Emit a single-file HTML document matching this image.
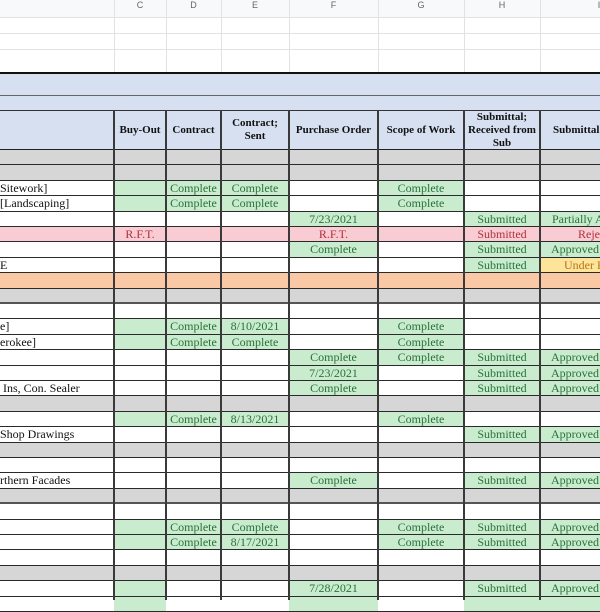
<!DOCTYPE html>
<html><head><meta charset="utf-8">
<style>
*{box-sizing:border-box;margin:0;padding:0}
body{width:600px;height:600px;overflow:hidden;background:#fff;position:relative;font-family:"Liberation Serif",serif}
.abs{position:absolute}
.hl{position:absolute;left:0;width:600px;height:1px;background:#e2e2e2}
.vl{position:absolute;width:1px;background:#e2e2e2;top:0;height:72px}
.colh{position:absolute;top:0;height:17px;line-height:17px;font:9px "Liberation Sans",sans-serif;color:#666;text-align:center}
.r{position:absolute;left:0;width:600px;height:15.4px;border-bottom:1px solid #2a2a2a}
.c{position:absolute;top:0;height:100%;font-size:12px;line-height:14px;text-align:center;color:#2b7038;white-space:nowrap;overflow:hidden}
.a{left:0;width:114px;text-align:left;color:#111}
.b{left:114px;width:52px}.cc{left:166px;width:55px}.d{left:221px;width:68px}.e{left:289px;width:89px}.f{left:378px;width:86px}.g{left:464px;width:76px}.h{left:540px;width:60px;text-align:left}
.G{background:#c9eccf}.Y{background:#fde49b;color:#b8741a}
.gray{background:#d6d6d6}.pink{background:#f9cbd2}.org{background:#f8c9a4}
.red{color:#b2303c}
.v{position:absolute;top:110px;height:490px;width:2px;background:#3a3a3a}
.hd{position:absolute;top:110px;height:40px;display:flex;align-items:center;justify-content:center;text-align:center;font-weight:bold;font-size:11px;line-height:13px;color:#111}
</style></head><body>
<div class="abs" style="left:0;top:0;width:600px;height:17px;background:#f8f9fa"></div>
<div class="hl" style="top:17px"></div><div class="hl" style="top:33px"></div><div class="hl" style="top:49px"></div>
<div class="vl" style="left:114px"></div><div class="vl" style="left:166px"></div><div class="vl" style="left:221px"></div><div class="vl" style="left:289px"></div><div class="vl" style="left:378px"></div><div class="vl" style="left:464px"></div><div class="vl" style="left:540px"></div>
<div class="colh" style="left:114px;width:52px">C</div><div class="colh" style="left:166px;width:55px">D</div><div class="colh" style="left:221px;width:68px">E</div><div class="colh" style="left:289px;width:89px">F</div><div class="colh" style="left:378px;width:86px">G</div><div class="colh" style="left:464px;width:76px">H</div><div class="colh" style="left:594px;width:10px">I</div>
<div class="abs" style="left:0;top:72px;width:600px;height:2px;background:#111"></div>
<div class="abs" style="left:0;top:74px;width:600px;height:21px;background:#d7e0f1"></div>
<div class="abs" style="left:0;top:95px;width:600px;height:1px;background:#666"></div>
<div class="abs" style="left:0;top:96px;width:600px;height:14px;background:#d7e0f1"></div>
<div class="abs" style="left:0;top:110px;width:600px;height:1px;background:#333"></div>
<div class="abs" style="left:0;top:111px;width:600px;height:39px;background:#d7e0f1;border-bottom:1px solid #222"></div>
<div class="hd" style="left:114px;width:52px">Buy-Out</div>
<div class="hd" style="left:166px;width:55px">Contract</div>
<div class="hd" style="left:221px;width:68px">Contract;<br>Sent</div>
<div class="hd" style="left:289px;width:89px">Purchase Order</div>
<div class="hd" style="left:378px;width:86px">Scope of Work</div>
<div class="hd" style="left:464px;width:76px">Submittal;<br>Received from<br>Sub</div>
<div class="hd" style="left:553px;width:80px;justify-content:flex-start">Submittal;</div>

<div class="r gray" style="top:150px"></div>
<div class="r gray" style="top:165.4px"></div>
<div class="r" style="top:180.8px"><div class="c a">Sitework]</div><div class="c b G"></div><div class="c cc G">Complete</div><div class="c d G">Complete</div><div class="c f G">Complete</div></div>
<div class="r" style="top:196.2px"><div class="c a">[Landscaping]</div><div class="c b G"></div><div class="c cc G">Complete</div><div class="c d G">Complete</div><div class="c f G">Complete</div></div>
<div class="r" style="top:211.6px"><div class="c e G">7/23/2021</div><div class="c g G">Submitted</div><div class="c h G" style="padding-left:12px">Partially Approved</div></div>
<div class="r pink" style="top:227px"><div class="c b red">R.F.T.</div><div class="c e red">R.F.T.</div><div class="c g red">Submitted</div><div class="c h red" style="padding-left:38px">Rejected</div></div>
<div class="r" style="top:242.4px"><div class="c e G">Complete</div><div class="c g G">Submitted</div><div class="c h G" style="padding-left:11px">Approved</div></div>
<div class="r" style="top:257.8px"><div class="c a">E</div><div class="c g G">Submitted</div><div class="c h Y" style="padding-left:24px">Under Review</div></div>
<div class="r org" style="top:273.2px"></div>
<div class="r gray" style="top:288.6px;border-bottom:2px solid #555"></div>
<div class="r" style="top:304px"></div>
<div class="r" style="top:319.4px"><div class="c a">e]</div><div class="c b G"></div><div class="c cc G">Complete</div><div class="c d G">8/10/2021</div><div class="c f G">Complete</div></div>
<div class="r" style="top:334.8px"><div class="c a">erokee]</div><div class="c b G"></div><div class="c cc G">Complete</div><div class="c d G">Complete</div><div class="c f G">Complete</div></div>
<div class="r" style="top:350.2px"><div class="c e G">Complete</div><div class="c f G">Complete</div><div class="c g G">Submitted</div><div class="c h G" style="padding-left:11px">Approved</div></div>
<div class="r" style="top:365.6px"><div class="c e G">7/23/2021</div><div class="c g G">Submitted</div><div class="c h G" style="padding-left:11px">Approved</div></div>
<div class="r" style="top:381px"><div class="c a">&nbsp;Ins, Con. Sealer</div><div class="c e G">Complete</div><div class="c g G">Submitted</div><div class="c h G" style="padding-left:11px">Approved</div></div>
<div class="r gray" style="top:396.4px"></div>
<div class="r" style="top:411.8px"><div class="c b G"></div><div class="c cc G">Complete</div><div class="c d G">8/13/2021</div><div class="c f G">Complete</div></div>
<div class="r" style="top:427.2px"><div class="c a">Shop Drawings</div><div class="c g G">Submitted</div><div class="c h G" style="padding-left:11px">Approved</div></div>
<div class="r gray" style="top:442.6px"></div>
<div class="r" style="top:458px"></div>
<div class="r" style="top:473.4px"><div class="c a">rthern Facades</div><div class="c e G">Complete</div><div class="c g G">Submitted</div><div class="c h G" style="padding-left:11px">Approved</div></div>
<div class="r gray" style="top:488.8px;border-bottom:2px solid #555"></div>
<div class="r" style="top:504.2px"></div>
<div class="r" style="top:519.6px"><div class="c b G"></div><div class="c cc G">Complete</div><div class="c d G">Complete</div><div class="c f G">Complete</div><div class="c g G">Submitted</div><div class="c h G" style="padding-left:11px">Approved</div></div>
<div class="r" style="top:535px"><div class="c b G"></div><div class="c cc G">Complete</div><div class="c d G">8/17/2021</div><div class="c f G">Complete</div><div class="c g G">Submitted</div><div class="c h G" style="padding-left:11px">Approved</div></div>
<div class="r" style="top:550.4px"></div>
<div class="r gray" style="top:565.8px"></div>
<div class="r" style="top:581.2px"><div class="c b G"></div><div class="c e G">7/28/2021</div><div class="c g G">Submitted</div><div class="c h G" style="padding-left:11px">Approved</div></div>
<div class="r" style="top:596.6px"><div class="c b G"></div><div class="c e G"></div><div class="c g G"></div><div class="c h G"></div></div>

<div class="v" style="left:113px"></div><div class="v" style="left:165px"></div><div class="v" style="left:220px"></div><div class="v" style="left:288px"></div><div class="v" style="left:377px"></div><div class="v" style="left:463px"></div><div class="v" style="left:539px"></div>
</body></html>
